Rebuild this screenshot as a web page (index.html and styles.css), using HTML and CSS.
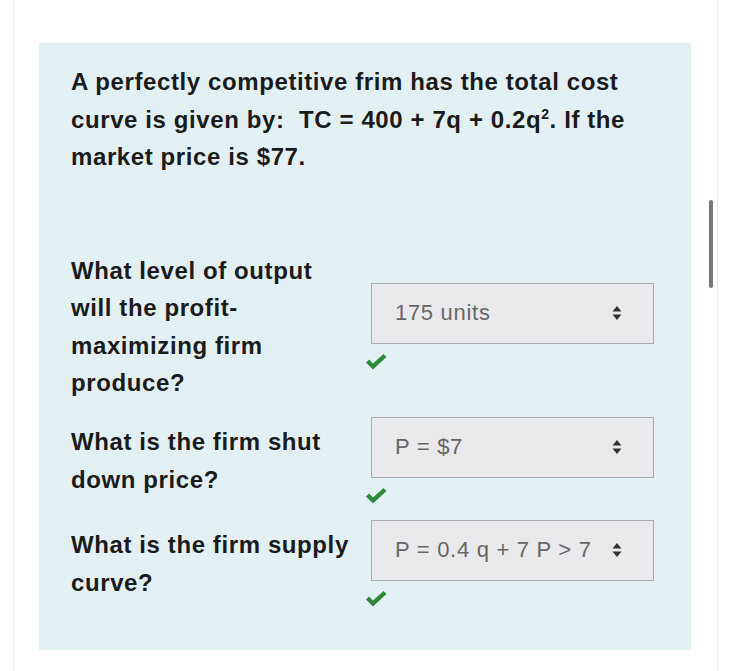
FILE: index.html
```html
<!DOCTYPE html>
<html lang="en">
<head>
  <meta charset="UTF-8">
  <title>Perfect competition question</title>
  <link rel="stylesheet" href="styles.css">
</head>
<body>
  <div class="page">
    <div class="panel">
      <p class="intro">
        A perfectly competitive frim has the total cost curve is given by:&nbsp; TC = 400 + 7q + 0.2q<sup>2</sup>. If the market price is $77.
      </p>

      <div class="questions">
        <div class="q">What level of output will the profit-maximizing firm produce?</div>
        <div class="answer">
          <div class="select">
            <span>175 units</span>
            <svg class="arrows" width="10" height="16" viewBox="0 0 10 16"><path d="M5 1 L9.5 6.5 H0.5 Z M5 15 L9.5 9.5 H0.5 Z" fill="#333"/></svg>
          </div>
          <svg class="check" width="24" height="18" viewBox="0 0 24 18"><path d="M2 9.5 L5 6.5 L9 10.5 L19.5 1 L22.5 4 L9 16.5 Z" fill="#2f8a3b"/></svg>
        </div>

        <div class="q">What is the firm shut down price?</div>
        <div class="answer">
          <div class="select">
            <span>P = $7</span>
            <svg class="arrows" width="10" height="16" viewBox="0 0 10 16"><path d="M5 1 L9.5 6.5 H0.5 Z M5 15 L9.5 9.5 H0.5 Z" fill="#333"/></svg>
          </div>
          <svg class="check" width="24" height="18" viewBox="0 0 24 18"><path d="M2 9.5 L5 6.5 L9 10.5 L19.5 1 L22.5 4 L9 16.5 Z" fill="#2f8a3b"/></svg>
        </div>

        <div class="q">What is the firm supply curve?</div>
        <div class="answer">
          <div class="select">
            <span>P = 0.4 q + 7 P &gt; 7</span>
            <svg class="arrows" width="10" height="16" viewBox="0 0 10 16"><path d="M5 1 L9.5 6.5 H0.5 Z M5 15 L9.5 9.5 H0.5 Z" fill="#333"/></svg>
          </div>
          <svg class="check" width="24" height="18" viewBox="0 0 24 18"><path d="M2 9.5 L5 6.5 L9 10.5 L19.5 1 L22.5 4 L9 16.5 Z" fill="#2f8a3b"/></svg>
        </div>
      </div>
    </div>
    <div class="scrollbar"></div>
  </div>
</body>
</html>
```

FILE: styles.css
```css
html, body {
  margin: 0;
  background: #fff;
}

body {
  font-family: "Liberation Sans", Arial, sans-serif;
  color: #1b1b1b;
  overflow: hidden;
}

.page {
  position: relative;
  margin: 0 16px 0 13px;
  min-height: 100vh;
  border-left: 1px solid #e9e9e9;
  border-right: 1px solid #e9e9e9;
  padding: 43px 26px 0 25px;
  box-sizing: border-box;
}

.panel {
  background: #e3f0f3;
  padding: 20px 36px 42px 32px;
}

.intro {
  margin: 0;
  font-size: 24px;
  letter-spacing: 0.6px;
  font-weight: bold;
  line-height: 37.5px;
}

.intro sup {
  font-size: 14px;
  line-height: 0;
}

.questions {
  margin-top: 76px;
  display: grid;
  grid-template-columns: 285px 283px;
  column-gap: 15px;
  row-gap: 15px;
  align-items: center;
}

.q {
  font-size: 24px;
  letter-spacing: 0.6px;
  font-weight: bold;
  line-height: 37.5px;
}

.select {
  height: 61px;
  box-sizing: border-box;
  border: 1px solid #a8acb0;
  background: #e9e9ec;
  display: flex;
  align-items: center;
  justify-content: space-between;
  padding: 0 31px 0 23px;
  font-size: 22px;
  letter-spacing: 0.7px;
  color: #666;
}

.check {
  display: block;
  margin: 9px 0 0 -7px;
}

.scrollbar {
  position: absolute;
  right: 4px;
  top: 200px;
  width: 4px;
  height: 88px;
  border-radius: 2px;
  background: #777;
}
```
